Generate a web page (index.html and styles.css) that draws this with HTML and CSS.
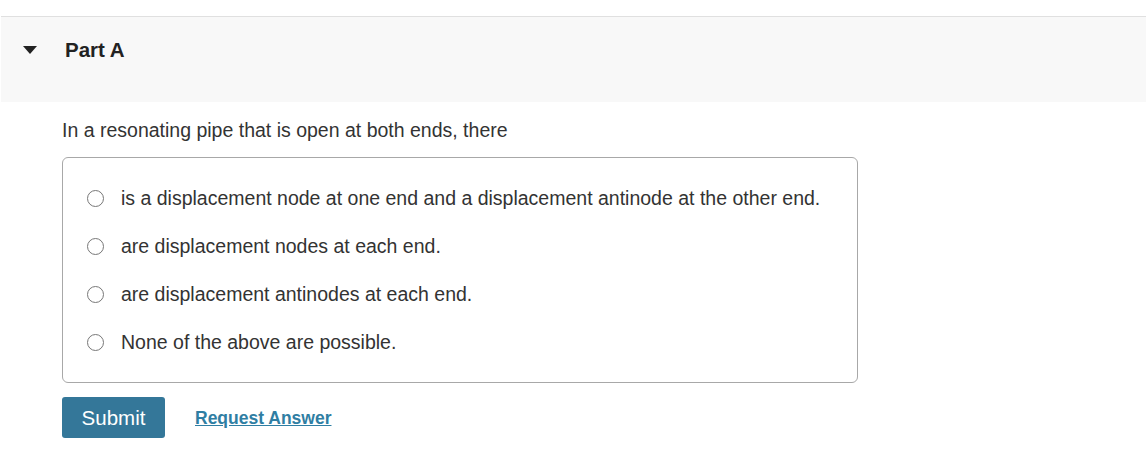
FILE: index.html
```html
<!DOCTYPE html>
<html lang="en">
<head>
    <meta charset="UTF-8">
    <title>Part A</title>
    <link rel="stylesheet" href="styles.css">
</head>
<body>
    <div class="part">
        <div class="part-header">
            <div class="part-title">
                <span class="caret"></span>
                <h2>Part A</h2>
            </div>
        </div>
        <div class="part-body">
            <p class="question">In a resonating pipe that is open at both ends, there</p>
            <div class="choices">
                <label class="choice"><input type="radio" name="ans"><span>is a displacement node at one end and a displacement antinode at the other end.</span></label>
                <label class="choice"><input type="radio" name="ans"><span>are displacement nodes at each end.</span></label>
                <label class="choice"><input type="radio" name="ans"><span>are displacement antinodes at each end.</span></label>
                <label class="choice"><input type="radio" name="ans"><span>None of the above are possible.</span></label>
            </div>
            <div class="actions">
                <button type="button" class="submit">Submit</button>
                <a href="#" class="request">Request Answer</a>
            </div>
        </div>
    </div>
</body>
</html>
```
FILE: styles.css
```css
body {
    margin: 0;
    padding: 16px 0 0 1px;
    font-family: "Liberation Sans", Arial, sans-serif;
    color: #333;
    background: #fff;
}
.part-header {
    height: 64px;
    padding-top: 21px;
    border-top: 1px solid #e0e0e0;
    background-color: #f8f8f8;
}
.part-title {
    display: flex;
    align-items: center;
    height: 24px;
}
.caret {
    width: 0;
    height: 0;
    margin-left: 22px;
    border-left: 7px solid transparent;
    border-right: 7px solid transparent;
    border-top: 8px solid #222;
}
.part-title h2 {
    margin: 0 0 0 28px;
    font-size: 20.5px;
    font-weight: bold;
    color: #222;
}
.part-body {
    padding: 0 0 0 61px;
}
.question {
    margin: 16px 0 15px;
    font-size: 19.5px;
    line-height: 24px;
}
.choices {
    width: 794px;
    border: 1px solid #a8a8a8;
    border-radius: 6px;
    padding: 16px 0 16px;
}
.choice {
    display: flex;
    align-items: center;
    height: 48px;
    font-size: 19.5px;
}
.choice input {
    width: 17px;
    height: 17px;
    margin: 0 17px 0 24px;
    appearance: none;
    border: 1px solid #777;
    border-radius: 50%;
    background: #fff;
}
.actions {
    display: flex;
    align-items: center;
    margin-top: 14px;
}
.submit {
    width: 103px;
    height: 41px;
    border: none;
    border-radius: 3px;
    background-color: #347799;
    color: #fff;
    font-family: inherit;
    font-size: 20.5px;
}
.request {
    margin: 2px 0 0 30px;
    color: #2f7ea3;
    font-size: 17.5px;
    font-weight: bold;
    text-decoration: underline;
}
```
